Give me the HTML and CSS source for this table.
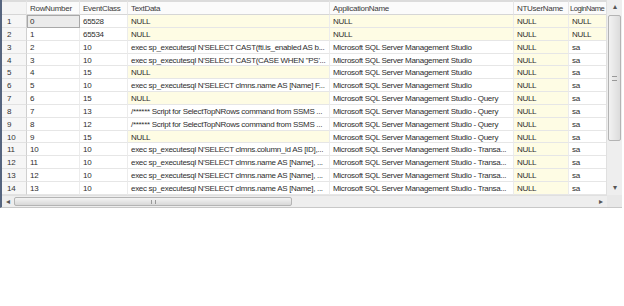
FILE: index.html
```html
<!DOCTYPE html>
<html lang="en">
<head>
    <meta charset="UTF-8">
    <title>Trace Results</title>
    <link rel="stylesheet" href="styles.css">
</head>
<body>
    <div class="frame">
        <div class="main">
            <div class="grid">
                <div class="hd corner"></div>
                <div class="hd">RowNumber</div>
                <div class="hd">EventClass</div>
                <div class="hd">TextData</div>
                <div class="hd">ApplicationName</div>
                <div class="hd">NTUserName</div>
                <div class="hd tight">LoginName</div>

                <div class="rn">1</div><div class="c sel">0</div><div class="c">65528</div><div class="c y">NULL</div><div class="c y">NULL</div><div class="c y">NULL</div><div class="c y">NULL</div>
                <div class="rn">2</div><div class="c">1</div><div class="c">65534</div><div class="c y">NULL</div><div class="c y">NULL</div><div class="c y">NULL</div><div class="c y">NULL</div>
                <div class="rn">3</div><div class="c">2</div><div class="c">10</div><div class="c">exec sp_executesql N'SELECT CAST(fti.is_enabled AS b...</div><div class="c">Microsoft SQL Server Management Studio</div><div class="c y">NULL</div><div class="c">sa</div>
                <div class="rn">4</div><div class="c">3</div><div class="c">10</div><div class="c">exec sp_executesql N'SELECT CAST(CASE WHEN "PS'...</div><div class="c">Microsoft SQL Server Management Studio</div><div class="c y">NULL</div><div class="c">sa</div>
                <div class="rn">5</div><div class="c">4</div><div class="c">15</div><div class="c y">NULL</div><div class="c">Microsoft SQL Server Management Studio</div><div class="c y">NULL</div><div class="c">sa</div>
                <div class="rn">6</div><div class="c">5</div><div class="c">10</div><div class="c">exec sp_executesql N'SELECT clmns.name AS [Name] F...</div><div class="c">Microsoft SQL Server Management Studio</div><div class="c y">NULL</div><div class="c">sa</div>
                <div class="rn">7</div><div class="c">6</div><div class="c">15</div><div class="c y">NULL</div><div class="c">Microsoft SQL Server Management Studio - Query</div><div class="c y">NULL</div><div class="c">sa</div>
                <div class="rn">8</div><div class="c">7</div><div class="c">13</div><div class="c">/****** Script for SelectTopNRows command from SSMS ...</div><div class="c">Microsoft SQL Server Management Studio - Query</div><div class="c y">NULL</div><div class="c">sa</div>
                <div class="rn">9</div><div class="c">8</div><div class="c">12</div><div class="c">/****** Script for SelectTopNRows command from SSMS ...</div><div class="c">Microsoft SQL Server Management Studio - Query</div><div class="c y">NULL</div><div class="c">sa</div>
                <div class="rn">10</div><div class="c">9</div><div class="c">15</div><div class="c y">NULL</div><div class="c">Microsoft SQL Server Management Studio - Query</div><div class="c y">NULL</div><div class="c">sa</div>
                <div class="rn">11</div><div class="c">10</div><div class="c">10</div><div class="c">exec sp_executesql N'SELECT clmns.column_id AS [ID],...</div><div class="c">Microsoft SQL Server Management Studio - Transa...</div><div class="c y">NULL</div><div class="c">sa</div>
                <div class="rn">12</div><div class="c">11</div><div class="c">10</div><div class="c">exec sp_executesql N'SELECT clmns.name AS [Name], ...</div><div class="c">Microsoft SQL Server Management Studio - Transa...</div><div class="c y">NULL</div><div class="c">sa</div>
                <div class="rn">13</div><div class="c">12</div><div class="c">10</div><div class="c">exec sp_executesql N'SELECT clmns.name AS [Name], ...</div><div class="c">Microsoft SQL Server Management Studio - Transa...</div><div class="c y">NULL</div><div class="c">sa</div>
                <div class="rn">14</div><div class="c">13</div><div class="c">10</div><div class="c">exec sp_executesql N'SELECT clmns.name AS [Name], ...</div><div class="c">Microsoft SQL Server Management Studio - Transa...</div><div class="c y">NULL</div><div class="c">sa</div>
            </div>
            <div class="vscroll">
                <div class="arrow">&#9652;</div>
                <div class="vthumb"><span class="grip-v"></span></div>
                <div class="track"></div>
                <div class="arrow">&#9662;</div>
            </div>
        </div>
        <div class="bottom">
            <div class="hscroll">
                <div class="arrow-h">&#9666;</div>
                <div class="hthumb"><span class="grip-h"></span></div>
                <div class="track"></div>
                <div class="arrow-h">&#9656;</div>
            </div>
            <div class="sizebox"></div>
        </div>
    </div>
</body>
</html>
```

FILE: styles.css
```css
body {
    margin: 0;
    background: #fff;
    font-family: "Liberation Sans", Arial, sans-serif;
    font-size: 8px;
    letter-spacing: -0.3px;
    color: #333;
}
.frame {
    width: 622px;
    height: 208px;
    display: flex;
    flex-direction: column;
    border-left: 2px solid #56657f;
    border-bottom: 1px solid #c8c8c8;
    box-sizing: border-box;
    background: #fff;
}
.main {
    display: flex;
    height: 195px;
    overflow: hidden;
}
.grid {
    width: 605px;
    display: grid;
    grid-template-columns: 25px 53px 48px 202px 184px 55px 38px;
    grid-template-rows: 15px repeat(14, 12.85px);
    overflow: hidden;
}
.hd {
    border-top: 2px solid #dcdcdc;
    border-bottom: 1px solid #d6d6d6;
    border-right: 1px solid #e6e6e6;
    padding: 2px 0 0 3px;
    white-space: nowrap;
    overflow: hidden;
    color: #3a3a3a;
    background: #fbfbfb;
}
.hd.tight {
    padding-left: 1px;
    font-size: 7.6px;
    letter-spacing: -0.5px;
    border-right: none;
}
.corner {
    background: #f4f4f4;
}
.rn {
    background: #f6f6f6;
    border-right: 1px solid #d0d0d0;
    border-bottom: 1px solid #e2e2e2;
    padding: 2px 0 0 5px;
    color: #333;
}
.c {
    border-right: 1px solid #ececec;
    border-bottom: 1px solid #e6e6e6;
    padding: 2px 0 0 3px;
    white-space: nowrap;
    overflow: hidden;
    color: #2e2e2e;
}
.y {
    background: #fefce4;
}
.sel {
    background: #ebebeb;
    outline: 1px solid #a8a8a8;
    outline-offset: -1px;
}
.vscroll {
    width: 15px;
    display: flex;
    flex-direction: column;
    background: #eeeeee;
    border-left: 1px solid #e0e0e0;
}
.arrow {
    height: 14px;
    text-align: center;
    font-size: 8px;
    line-height: 14px;
    color: #555;
}
.vthumb {
    height: 124px;
    margin: 1px 1px;
    border: 1px solid #b4b4b4;
    border-radius: 2px;
    background: linear-gradient(to right, #f2f2f2, #dcdcdc);
    display: flex;
    align-items: center;
    justify-content: center;
}
.grip-v {
    width: 5px;
    height: 5px;
    border-top: 1px solid #999;
    border-bottom: 1px solid #999;
    box-sizing: border-box;
}
.track {
    flex: 1;
}
.bottom {
    display: flex;
    height: 12px;
}
.hscroll {
    width: 605px;
    display: flex;
    background: #eeeeee;
    border-top: 1px solid #e0e0e0;
}
.arrow-h {
    width: 12px;
    text-align: center;
    font-size: 8px;
    line-height: 11px;
    color: #555;
}
.hthumb {
    width: 276px;
    margin: 1px 0;
    border: 1px solid #b4b4b4;
    border-radius: 2px;
    background: linear-gradient(to bottom, #f4f4f4, #d8d8d8);
    display: flex;
    align-items: center;
    justify-content: center;
}
.grip-h {
    width: 5px;
    height: 4px;
    border-left: 1px solid #999;
    border-right: 1px solid #999;
    box-sizing: border-box;
}
.sizebox {
    flex: 1;
    background: #e8e8e8;
}
```
